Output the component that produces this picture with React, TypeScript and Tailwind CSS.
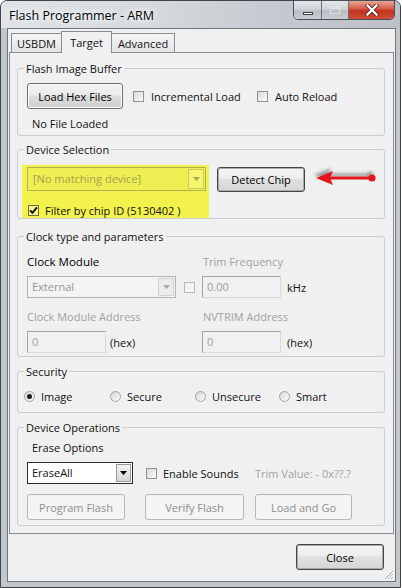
import type { ReactNode } from 'react'

// small triangle used in the dropdown buttons
function Tri({ color = '#000' }: { color?: string }) {
  return (
    <svg width="7" height="4" viewBox="0 0 7 4">
      <path d="M0 0 H7 L3.5 4 Z" fill={color} />
    </svg>
  )
}

function Check({ checked = false, className = '' }: { checked?: boolean; className?: string }) {
  return (
    <span
      className={`flex h-[11px] w-[11px] shrink-0 items-center justify-center border ${
        className || 'border-[#8f8f8f] bg-linear-to-br from-[#d9d9d9] to-[#fbfbfb]'
      }`}
    >
      {checked && (
        <svg width="9" height="9" viewBox="0 0 9 9">
          <path d="M1 4.3 L3.4 6.8 L8 1.3" fill="none" stroke="#111" strokeWidth="1.9" />
        </svg>
      )}
    </span>
  )
}

function Radio({ checked = false, label, w }: { checked?: boolean; label: string; w: string }) {
  return (
    <div className={`flex items-center ${w}`}>
      <span className="flex h-[11px] w-[11px] items-center justify-center rounded-full border border-[#a4a4a4] bg-linear-to-br from-[#d4d4d4] to-white">
        {checked && <span className="h-[5px] w-[5px] rounded-full bg-[#1c1c1c]" />}
      </span>
      <span className="ml-[6px]">{label}</span>
    </div>
  )
}

function Btn({
  children,
  className = '',
  disabled = false,
  strong = false,
}: {
  children: ReactNode
  className?: string
  disabled?: boolean
  strong?: boolean
}) {
  const tone = disabled
    ? 'border-[#b3b7ba] bg-[#f4f4f4] text-[#8e8e8e]'
    : strong
      ? 'border-[#454545] shadow-[inset_0_0_0_1px_#a9a9a9] bg-[linear-gradient(#f5f5f5,#ededed_45%,#e0e0e0_50%,#d6d6d6)] text-black'
      : 'border-[#707070] shadow-[inset_0_0_0_1px_#fbfbfb] bg-[linear-gradient(#f2f2f2,#ebebeb_45%,#dddddd_50%,#cfcfcf)] text-black'
  return (
    <div className={`flex shrink-0 items-center justify-center rounded-[3px] border ${tone} ${className}`}>
      {children}
    </div>
  )
}

function Edit({ value }: { value: string }) {
  return (
    <div className="h-[22px] w-[79px] shrink-0 border border-[#a3a3a3] border-r-[#d9d9d9] border-b-[#d9d9d9] bg-[#f1f1f1] pl-[4px] leading-[20px] text-[#9c9c9c]">
      {value}
    </div>
  )
}

function Group({ title, className = '', children }: { title: string; className?: string; children: ReactNode }) {
  return (
    <div className={`ml-[7px] w-[368px] rounded-[3px] border border-[#c8ced3] ${className}`}>
      <div className="-mt-[8px] ml-[6px] h-[15px] w-fit bg-[#f0f0f0] px-[2px] leading-[15px]">{title}</div>
      {children}
    </div>
  )
}

export default function App() {
  return (
    <div className="h-[588px] w-[402px] bg-white font-['Open_Sans','Noto_Sans',sans-serif] text-[11px] leading-[15px] text-[#111]">
      <div className="h-[588px] w-[401px] rounded-t-[7px] border border-[#40454a] bg-[#c2c7cc]">
        {/* title bar */}
        <div className="flex h-[27px] rounded-t-[6px] bg-[linear-gradient(90deg,#e0e3e7,#d7dbdf_35%,#c4c9cf_70%,#bcc1c7)]">
          <span className="ml-[8px] self-center pt-[1px] text-[12.5px] text-black [text-shadow:0_0_8px_#fff,0_0_4px_#fff]">
            Flash Programmer - ARM
          </span>
          <div className="relative z-10 mr-[5px] ml-auto -mt-[1px] flex h-[20px] overflow-hidden rounded-b-[5px] border border-[#4a4f55]">
            <div className="flex w-[28px] items-end justify-center border-r border-[#6c7278] bg-[linear-gradient(#e3e6ea,#d0d4d9_45%,#b9bec4_55%,#c9cdd2)] pb-[4px]">
              <span className="h-[3px] w-[10px] border border-[#3b3f44] bg-white" />
            </div>
            <div className="flex w-[27px] items-center justify-center border-r border-[#6c7278] bg-[linear-gradient(#e3e6ea,#d0d4d9_45%,#b9bec4_55%,#c9cdd2)]">
              <span className="h-[8px] w-[10px] border border-[#dfe2e5] shadow-[inset_0_2px_0_#dfe2e5]" />
            </div>
            <div className="flex w-[45px] items-center justify-center bg-[linear-gradient(#e6a596,#d7634f_40%,#c3321d_55%,#cf4d37)]">
              <svg width="14" height="12" viewBox="0 0 14 12">
                <path d="M2.5 1.5 L11.5 10.5 M11.5 1.5 L2.5 10.5" stroke="#5a1a12" strokeWidth="4" strokeLinecap="square" />
                <path d="M2.5 1.5 L11.5 10.5 M11.5 1.5 L2.5 10.5" stroke="#fff" strokeWidth="2.4" strokeLinecap="square" />
              </svg>
            </div>
          </div>
        </div>

        {/* client area */}
        <div className="relative ml-[6px] h-[554px] w-[389px] border border-[#71767b] bg-[#f0f0f0]">
          {/* tabs */}
          <div className="relative z-10 -mb-[1px] flex h-[24px] items-end pl-[3px]">
            <div className="flex h-[20px] w-[50px] items-center justify-center border-y border-l border-[#898c95] bg-linear-to-b from-[#f5f5f5] to-[#e3e3e3]">
              USBDM
            </div>
            <div className="flex h-[22px] w-[51px] items-center justify-center border-x border-t border-[#898c95] bg-[#f0f0f0] pb-[1px]">
              Target
            </div>
            <div className="flex h-[20px] w-[63px] items-center justify-center border-y border-r border-[#898c95] bg-linear-to-b from-[#f5f5f5] to-[#e3e3e3]">
              Advanced
            </div>
          </div>

          {/* tab page */}
          <div className="ml-[1px] h-[482px] w-[385px] border border-[#898c95] bg-[#f0f0f0]">
            <Group title="Flash Image Buffer" className="mt-[15px] pb-[4px]">
              <div className="mt-[7px] flex h-[26px] items-center">
                <Btn className="ml-[9px] h-[26px] w-[96px]">Load Hex Files</Btn>
                <div className="ml-[10px] flex w-[124px] items-center">
                  <Check />
                  <span className="ml-[7px]">Incremental Load</span>
                </div>
                <div className="flex items-center">
                  <Check />
                  <span className="ml-[7px]">Auto Reload</span>
                </div>
              </div>
              <div className="mt-[7px] ml-[14px] h-[15px]">No File Loaded</div>
            </Group>

            <Group title="Device Selection" className="mt-[13px]">
              <div className="flex items-start">
                <div className="mt-[8px] ml-[4px] h-[53px] w-[187px] bg-[#f3f24d] pt-[2px] pl-[5px]">
                  <div className="flex h-[24px] w-[179px] border border-[#b2b152] bg-[#efee52]">
                    <span className="flex-1 pl-[5px] leading-[22px] text-[#a4a24f]">[No matching device]</span>
                    <span className="m-[1px] flex w-[16px] items-center justify-center border border-[#cbca66] bg-[#f6f56c]">
                      <Tri color="#a9a762" />
                    </span>
                  </div>
                  <div className="mt-[12px] flex h-[15px] items-center pl-[1px]">
                    <Check checked className="border-[#6f6e40] bg-[#f7f68a]" />
                    <span className="ml-[6px]">Filter by chip ID (5130402 )</span>
                  </div>
                </div>
                <Btn strong className="mt-[10px] ml-[8px] h-[25px] w-[88px]">
                  Detect Chip
                </Btn>
                <svg className="mt-[9px] ml-[7px]" width="66" height="24" viewBox="0 0 66 24">
                  <defs>
                    <filter id="sh" x="-20%" y="-60%" width="140%" height="220%">
                      <feDropShadow dx="-2" dy="-3" stdDeviation="1.6" floodColor="#555" floodOpacity="0.55" />
                    </filter>
                  </defs>
                  <g filter="url(#sh)">
                    <path d="M16 12 H60" stroke="#e3141c" strokeWidth="3.2" />
                    <path d="M4 12 L21 5 L18 12 L21 19 Z" fill="#e3141c" />
                    <circle cx="60" cy="12" r="3.6" fill="#e3141c" />
                  </g>
                </svg>
              </div>
            </Group>

            <Group title="Clock type and parameters" className="mt-[17px] pb-[3px]">
              <div className="mt-[10px] flex h-[15px] items-center pl-[9px]">
                <span className="w-[176px] text-[11.5px] text-black">Clock Module</span>
                <span className="text-[#a2a2a2]">Trim Frequency</span>
              </div>
              <div className="mt-[7px] flex h-[22px] items-center pl-[9px]">
                <div className="flex h-[22px] w-[149px] border border-[#b4b4b4] bg-[#f3f3f3]">
                  <span className="flex-1 pl-[4px] leading-[20px] text-[#969696]">External</span>
                  <span className="m-[1px] flex w-[16px] items-center justify-center border border-[#d2d2d2] bg-[#ececec]">
                    <Tri color="#a8a8a8" />
                  </span>
                </div>
                <Check className="ml-[8px] border-[#b9b9b9] bg-[#f4f4f4]" />
                <div className="ml-[7px]">
                  <Edit value="0.00" />
                </div>
                <span className="ml-[6px]">kHz</span>
              </div>
              <div className="mt-[11px] flex h-[15px] items-center pl-[9px] text-[#a2a2a2]">
                <span className="w-[176px]">Clock Module Address</span>
                <span>NVTRIM Address</span>
              </div>
              <div className="mt-[7px] flex h-[22px] items-center pl-[9px]">
                <div className="flex w-[175px] items-center">
                  <Edit value="0" />
                  <span className="ml-[4px]">(hex)</span>
                </div>
                <Edit value="0" />
                <span className="ml-[6px]">(hex)</span>
              </div>
            </Group>

            <Group title="Security" className="mt-[14px] pb-[8px]">
              <div className="mt-[10px] flex h-[15px] items-center pl-[6px]">
                <Radio checked label="Image" w="w-[86px]" />
                <Radio label="Secure" w="w-[85px]" />
                <Radio label="Unsecure" w="w-[84px]" />
                <Radio label="Smart" w="w-[80px]" />
              </div>
            </Group>

            <Group title="Device Operations" className="mt-[14px] pb-[5px]">
              <div className="mt-[5px] ml-[14px] h-[15px]">Erase Options</div>
              <div className="mt-[7px] flex h-[22px] items-center pl-[9px]">
                <div className="flex h-[22px] w-[106px] border border-[#2b2b2b] bg-white">
                  <span className="flex-1 pl-[4px] leading-[20px]">EraseAll</span>
                  <span className="m-[1px] flex w-[15px] items-center justify-center border border-[#9a9a9a] bg-linear-to-b from-[#f3f3f3] to-[#d6d6d6]">
                    <Tri />
                  </span>
                </div>
                <div className="ml-[13px] flex w-[109px] items-center">
                  <Check />
                  <span className="ml-[6px]">Enable Sounds</span>
                </div>
                <span className="text-[#a2a2a2]">Trim Value: - 0x??.?</span>
              </div>
              <div className="mt-[10px] flex h-[26px] pl-[9px]">
                <Btn disabled className="h-[26px] w-[98px]">
                  Program Flash
                </Btn>
                <Btn disabled className="ml-[20px] h-[26px] w-[99px]">
                  Verify Flash
                </Btn>
                <Btn disabled className="ml-[11px] h-[26px] w-[97px]">
                  Load and Go
                </Btn>
              </div>
            </Group>
          </div>

          <div className="mt-[10px] flex">
            <Btn strong className="ml-[288px] h-[26px] w-[88px]">
              Close
            </Btn>
          </div>

          {/* size grip */}
          <svg className="absolute right-[1px] bottom-[1px]" width="11" height="11" viewBox="0 0 11 11">
            <path d="M10 2 L2 10 M10 5 L5 10 M10 8 L8 10" stroke="#a9a9a9" strokeWidth="1" />
            <path d="M11 3 L3 11 M11 6 L6 11 M11 9 L9 11" stroke="#ffffff" strokeWidth="1" />
          </svg>
        </div>
      </div>
    </div>
  )
}
